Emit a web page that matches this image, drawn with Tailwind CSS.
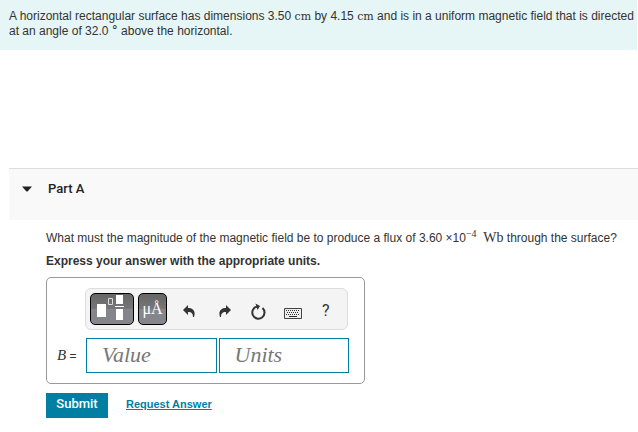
<!DOCTYPE html>
<html lang="en">
<head>
    <meta charset="UTF-8">
    <meta name="viewport" content="width=device-width, initial-scale=1.0">
    <title>Part A</title>
    <script src="https://cdn.jsdelivr.net/npm/@tailwindcss/browser@4"></script>
</head>
<body class="bg-white text-[#333] text-xs font-['Liberation_Sans',Arial,sans-serif]">
    <!-- problem statement -->
    <div class="bg-[#e6f5f5] pl-[9px] pt-[9px] pb-[11px] mr-px">
        <p class="leading-[15px]">A horizontal rectangular surface has dimensions 3.50 <span class="font-['DejaVu_Serif',serif] text-[11px] leading-none">cm</span> by 4.15 <span class="font-['DejaVu_Serif',serif] text-[11px] leading-none">cm</span> and is in a uniform magnetic field that is directed at an angle of 32.0 <span class="font-['DejaVu_Serif',serif] leading-none">°</span> above the horizontal.</p>
    </div>

    <div class="ml-[9px] mt-[118px] h-[52px] bg-[#f9f9f9] border-t border-[#ddd]">
        <button class="flex items-center gap-4 pl-[13px] pt-3 text-[#222]">
            <svg class="w-[10px] h-[6px]" viewBox="0 0 10 6"><path d="M0 0.5 H10 L6 5 Q5 6 4 5 Z" fill="#222"/></svg>
            <span class="font-[Roboto,sans-serif] text-[13px] leading-4 font-medium">Part A</span>
        </button>
    </div>

    <div class="pl-[46px] pt-[10px]">
        <p class="leading-4 whitespace-nowrap">What must the magnitude of the magnetic field be to produce a flux of 3.60 ×10<sup class="font-['Liberation_Serif',serif] text-[10px]">−4</sup>&nbsp; <span class="font-['Liberation_Serif',serif] text-sm leading-4">Wb</span> through the surface?</p>
        <p class="mt-[7px] leading-4 font-bold">Express your answer with the appropriate units.</p>

        <div class="mt-2 w-[319px] border border-[#999] rounded-[5px] pl-[10px] pr-4 pt-[10px] pb-[10px]">
            <!-- toolbar -->
            <div class="ml-7 h-[42px] flex items-center border border-[#ddd] rounded-md bg-[#f4f4f4] pl-1">
                <button aria-label="Templates" class="w-11 h-8 border border-black rounded-[5px] bg-linear-to-b from-[#666] from-0% via-[#77777a] via-50% to-[#85858c] to-50%">
                    <svg class="w-[42px] h-[30px]" viewBox="0 0 42 30">
                        <path d="M6 10h9v13H6zM25 1h7v9h-7zM24 12h9v1h-9zM25 15h7v11h-7z" fill="#fff"/>
                        <path d="M17.5 4.5h4v6h-4z" fill="none" stroke="#ddd"/>
                    </svg>
                </button>
                <button aria-label="Units" class="ml-1 w-[29px] h-8 border border-black rounded-[5px] bg-linear-to-b from-[#666] from-0% via-[#77777a] via-50% to-[#85858c] to-50% text-white text-base leading-7 font-['Liberation_Serif',serif]">μÅ</button>
                <button aria-label="Undo" class="ml-4 mt-1">
                    <svg class="w-3 h-[14px]" viewBox="0 0 12 14"><path d="M0 6 L5 1 V4 C10 4 13 7 11 13 H10 C10 10 9 8 5 8 V11 Z" fill="#333"/></svg>
                </button>
                <button aria-label="Redo" class="ml-6 mt-1">
                    <svg class="w-3 h-[14px]" viewBox="0 0 12 14"><path d="M12 6 L7 1 V4 C2 4 -1 7 1 13 H2 C2 10 3 8 7 8 V11 Z" fill="#333"/></svg>
                </button>
                <button aria-label="Reset" class="ml-5 mt-1">
                    <svg class="w-[15px] h-[17px]" viewBox="0 0 15 17"><path d="M11.5 5 A6.1 6.1 0 1 1 6 3.6" fill="none" stroke="#333" stroke-width="2"/><path d="M4.5 0.5 L9 3 L6.5 7 L5.5 4 Z" fill="#333"/></svg>
                </button>
                <button aria-label="Keyboard" class="ml-[18px] mt-2">
                    <svg class="w-[18px] h-[11px]" viewBox="0 0 18 11">
                        <path d="M.5.5h17v10H.5z" fill="#eee" stroke="#444"/>
                        <path d="M2 2.5h14M3 4.5h12M2 6.5h14" stroke="#333" stroke-dasharray="1 1"/>
                        <path d="M5 8.5h8" stroke="#333"/>
                    </svg>
                </button>
                <button aria-label="Help" class="ml-5 mt-1 font-[Roboto,sans-serif] text-base">?</button>
            </div>
            <!-- answer -->
            <div class="mt-2 flex items-center">
                <label for="value" class="w-[29px] shrink-0 whitespace-nowrap"><i class="font-['Liberation_Serif',serif] text-[15px]">B</i> =</label>
                <input id="value" type="text" placeholder="Value" class="min-w-0 flex-1 h-[35px] border border-[#007fa3] bg-white pl-[15px] pb-[2px] text-[22px] italic font-['Liberation_Serif',serif] placeholder:text-[#777]">
                <input aria-label="Units" type="text" placeholder="Units" class="ml-[2px] -mr-px min-w-0 flex-1 h-[35px] border border-[#007fa3] bg-white pl-[15px] pb-[2px] text-[22px] italic font-['Liberation_Serif',serif] placeholder:text-[#777]">
            </div>
        </div>

        <div class="mt-[9px] flex items-center gap-[18px]">
            <button class="w-[62px] h-[25px] pb-1 bg-[#007fa3] text-white font-[Roboto,sans-serif] text-[13px] font-medium">Submit</button>
            <a href="#" class="pb-[2px] text-[#007fa3] text-[11px] font-bold underline">Request Answer</a>
        </div>
    </div>
</body>
</html>
